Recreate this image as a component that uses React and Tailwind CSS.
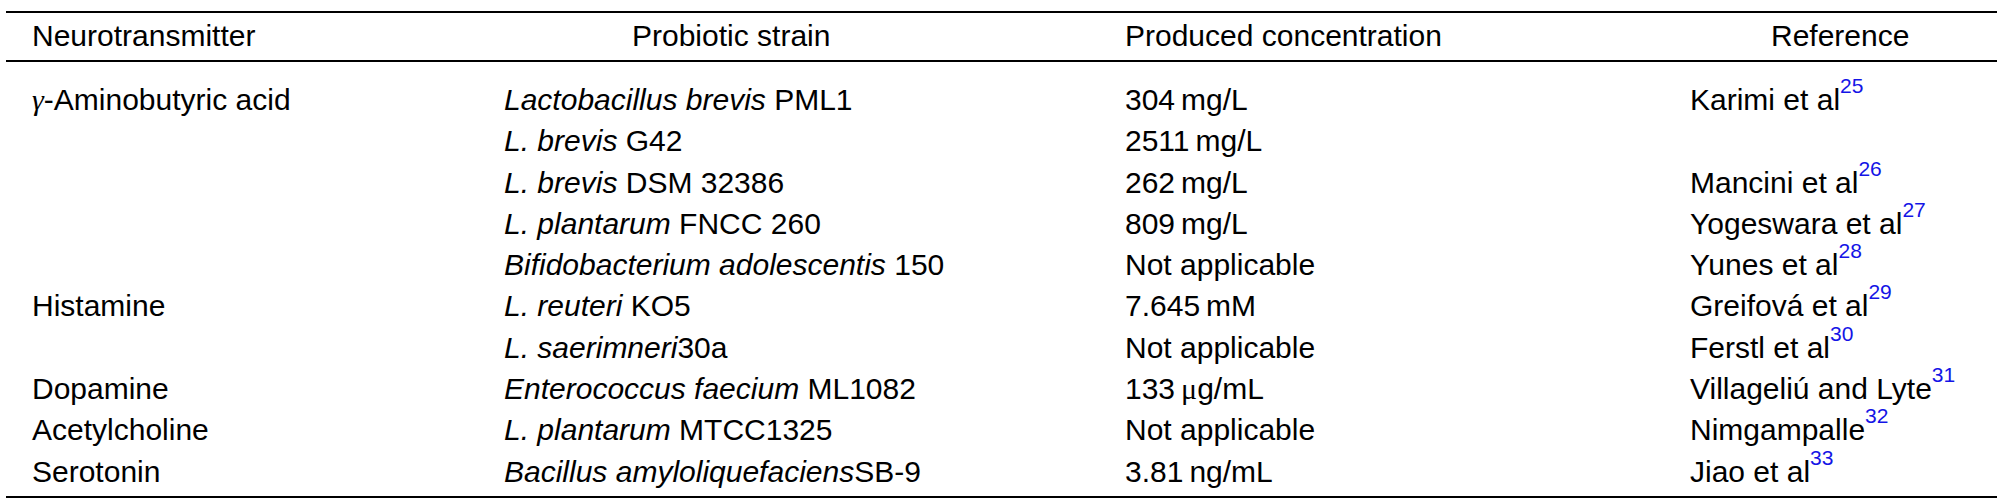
import React from "react";

const rows = [
  { nt: "γ", ntRest: "-Aminobutyric acid", sp: "Lactobacillus brevis", st: " PML1", conc: "304\u2009mg/L", ref: "Karimi et al", n: "25" },
  { sp: "L. brevis", st: " G42", conc: "2511\u2009mg/L" },
  { sp: "L. brevis", st: " DSM 32386", conc: "262\u2009mg/L", ref: "Mancini et al", n: "26" },
  { sp: "L. plantarum", st: " FNCC 260", conc: "809\u2009mg/L", ref: "Yogeswara et al", n: "27" },
  { sp: "Bifidobacterium adolescentis", st: " 150", conc: "Not applicable", ref: "Yunes et al", n: "28" },
  { nt: "Histamine", sp: "L. reuteri", st: " KO5", conc: "7.645\u2009mM", ref: "Greifová et al", n: "29" },
  { sp: "L. saerimneri", st: "30a", conc: "Not applicable", ref: "Ferstl et al", n: "30" },
  { nt: "Dopamine", sp: "Enterococcus faecium", st: " ML1082", conc: "mu", ref: "Villageliú and Lyte", n: "31" },
  { nt: "Acetylcholine", sp: "L. plantarum", st: " MTCC1325", conc: "Not applicable", ref: "Nimgampalle", n: "32" },
  { nt: "Serotonin", sp: "Bacillus amyloliquefaciens", st: "SB-9", conc: "3.81\u2009ng/mL", ref: "Jiao et al", n: "33" },
];

const cols = "grid grid-cols-[498px_621px_565px_307px]";

function Conc({ value }) {
  if (value === "mu") {
    return (
      <>
        133{"\u2009"}
        <span className="font-['Liberation_Serif',serif]">μ</span>g/mL
      </>
    );
  }
  return value;
}

export default function App() {
  return (
    <div className="w-[2014px] h-[503px] bg-white text-black font-['Liberation_Sans',Arial,sans-serif] text-[30px] leading-[41.3px] pl-[6px] pt-[11px]">
      <div className="w-[1991px]">
        <div className="h-[1.5px] bg-black" />
        <div className={`${cols} pt-[2.5px] pb-[4.2px]`}>
          <div className="pl-[26px]">Neurotransmitter</div>
          <div className="pl-[128px]">Probiotic strain</div>
          <div>Produced concentration</div>
          <div className="pl-[81px]">Reference</div>
        </div>
        <div className="h-[1.5px] bg-black" />
        <div className="pt-[17px] pb-[4px]">
          {rows.map((r, i) => (
            <div key={i} className={cols}>
              <div className="pl-[26px] whitespace-nowrap">
                {r.nt === "γ" ? (
                  <>
                    <span className="italic font-['Liberation_Serif',serif]">γ</span>
                    {r.ntRest}
                  </>
                ) : (
                  r.nt
                )}
              </div>
              <div className="whitespace-nowrap">
                <span className="italic">{r.sp}</span>
                {r.st}
              </div>
              <div className="whitespace-nowrap">
                <Conc value={r.conc} />
              </div>
              <div className="whitespace-nowrap">
                {r.ref}
                {r.n && <sup className="text-[21px] top-[-17px] text-[#1414e6]">{r.n}</sup>}
              </div>
            </div>
          ))}
        </div>
        <div className="h-[2px] bg-black" />
      </div>
    </div>
  );
}
